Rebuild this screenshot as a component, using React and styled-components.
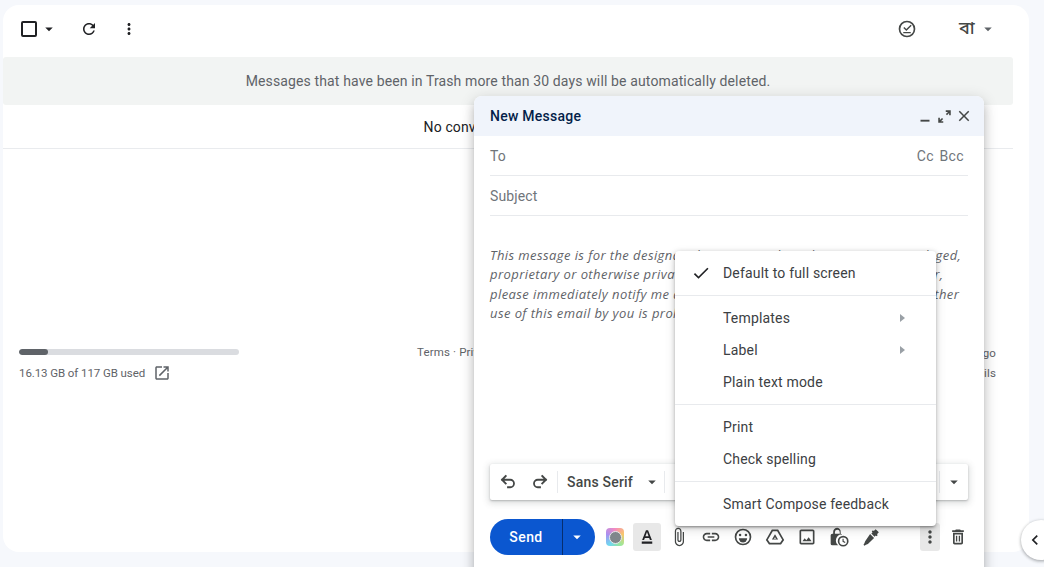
import React from "react";
import styled, { createGlobalStyle } from "styled-components";

const Global = createGlobalStyle`
  html, body { margin: 0; height: 567px; overflow: hidden; background: #f6f8fc; }
  body { font-family: Roboto, "Liberation Sans", sans-serif; letter-spacing: .13px; }
  * { box-sizing: border-box; }
`;

const Page = styled.div`
  position: relative;
  width: 1044px;
  height: 567px;
  padding: 5px 15px 15px 3px;
  overflow: hidden;
`;
const Panel = styled.main`
  width: 1026px;
  height: 547px;
  background: #fff;
  border-radius: 16px;
  padding-right: 16px;
  display: flex;
  flex-direction: column;
`;
const Toolbar = styled.div`
  height: 52px;
  display: flex;
  align-items: center;
  padding: 0 0 4px 18px;
  color: #444746;
  flex: none;
`;
const Spacer = styled.div`flex: 1;`;
const Ico = styled.svg`
  width: ${p => p.$s || 20}px;
  height: ${p => p.$s || 20}px;
  flex: none;
  display: block;
  fill: ${p => p.$c || "#444746"};
`;
const ToolSlot = styled.div`
  width: ${p => p.$w}px;
  margin-left: ${p => p.$ml || 0}px;
  display: flex;
  align-items: center;
  justify-content: center;
`;
const Lang = styled.span`
  font: 500 18px "Noto Sans Bengali", "Noto Sans", "DejaVu Sans", sans-serif;
  color: #444746;
  margin-right: 4px;
`;
const Banner = styled.div`
  height: 48px;
  flex: none;
  background: #f2f4f3;
  border-radius: 3px;
  color: #5f6368;
  font-size: 14px;
  display: flex;
  align-items: center;
  justify-content: center;
`;
const EmptyRow = styled.div`
  height: 44px;
  flex: none;
  border-bottom: 1px solid #e9ebee;
  color: #202124;
  font-size: 14px;
  display: flex;
  align-items: center;
  justify-content: center;
`;
const Footer = styled.footer`
  display: grid;
  grid-template-columns: 1fr auto 1fr;
  padding: 200px 17px 0 16px;
  font-size: 11.5px;
  color: #5f6368;
`;
const Storage = styled.div`
  display: flex;
  flex-direction: column;
  gap: 10px;
`;
const Meter = styled.div`
  width: 220px;
  height: 6px;
  border-radius: 3px;
  background: #dadce0;
  overflow: hidden;
`;
const MeterFill = styled.div`
  height: 100%;
  width: 29px;
  border-radius: 3px;
  background: #5f6368;
`;
const StorageText = styled.div`
  display: flex;
  align-items: center;
  gap: 8px;
  margin-top: -1px;
  letter-spacing: -.08px;
`;
const Terms = styled.div`
  line-height: 14px;
  margin: -4px 0 0 14px;
`;
const Activity = styled.div`
  text-align: right;
  line-height: 20px;
  margin-top: -6px;
`;

const Compose = styled.section`
  position: absolute;
  left: 474px;
  top: 96px;
  width: 510px;
  height: 480px;
  background: #fff;
  border-radius: 8px 8px 0 0;
  box-shadow: 0 8px 10px 1px rgba(0,0,0,.14), 0 3px 14px 2px rgba(0,0,0,.12), 0 5px 5px -3px rgba(0,0,0,.2);
  display: flex;
  flex-direction: column;
`;
const ComposeHead = styled.header`
  height: 40px;
  flex: none;
  background: #f0f4fb;
  border-radius: 8px 8px 0 0;
  display: flex;
  align-items: center;
  padding: 0 11px 0 16px;
  color: #041e49;
  font-size: 14px;
  font-weight: 500;
  letter-spacing: .25px;
`;
const HeadIcons = styled.div`
  display: flex;
  align-items: center;
  gap: 3px;
`;
const Fields = styled.div`
  padding: 0 16px;
  flex: none;
`;
const Field = styled.div`
  height: 40px;
  border-bottom: 1px solid #e8eaed;
  display: flex;
  align-items: center;
  justify-content: space-between;
  color: #70757a;
  font-size: 14px;
`;
const CcBcc = styled.span`
  margin-right: 4px;
  letter-spacing: .4px;
  word-spacing: 1.5px;
`;
const Disclaimer = styled.div`
  margin: 30px 16px 0;
  height: 218px;
  font: italic 13px/19.4px "Open Sans", sans-serif;
  letter-spacing: .42px;
  color: #5f6368;
  flex: none;
  white-space: nowrap;
`;
const Format = styled.div`
  margin: 0 16px;
  height: 36px;
  flex: none;
  display: flex;
  align-items: center;
  background: #fff;
  border-radius: 2px;
  box-shadow: 0 1px 2px rgba(60,64,67,.3), 0 2px 6px 2px rgba(60,64,67,.15);
  padding-left: 2px;
  color: #444746;
  font-size: 14px;
`;
const FmtBtn = styled.div`
  width: 32px;
  display: flex;
  justify-content: center;
`;
const FmtDiv = styled.div`
  width: 1px;
  height: 22px;
  background: #e8eaed;
  margin: ${p => p.$m || "0 9px 0 1px"};
`;
const FontName = styled.span`
  font-weight: 500;
  width: 76px;
  letter-spacing: .2px;
  color: #444746;
`;
const ActionRow = styled.div`
  margin: 19px 16px 0;
  height: 36px;
  flex: none;
  display: flex;
  align-items: center;
`;
const SendGroup = styled.div`
  width: 105px;
  height: 36px;
  border-radius: 18px;
  background: #0b57d0;
  color: #fff;
  display: flex;
  align-items: stretch;
  margin-right: 8px;
  flex: none;
`;
const SendLabel = styled.div`
  width: 73px;
  border-right: 1px solid #062e6f;
  display: flex;
  align-items: center;
  justify-content: center;
  font-size: 14px;
  font-weight: 500;
  letter-spacing: .4px;
`;
const SendArrow = styled.div`
  flex: 1;
  display: flex;
  align-items: center;
  justify-content: center;
  padding-right: 4px;
`;
const Act = styled.div`
  width: ${p => p.$w || 32}px;
  height: 28px;
  flex: none;
  display: flex;
  align-items: center;
  justify-content: center;
  border-radius: 3px;
  background: ${p => (p.$on ? "#e8e8e8" : "transparent")};
  margin: ${p => p.$m || 0};
`;
const ColorChip = styled.div`
  width: 18px;
  height: 18px;
  border-radius: 4px;
  background: conic-gradient(#f58ac0, #f8c86a, #9be89a, #6fd8f0, #a98ff0, #f58ac0);
  display: flex;
  align-items: center;
  justify-content: center;
`;
const ColorDot = styled.div`
  width: 13px;
  height: 13px;
  border-radius: 50%;
  background: #80868b;
  border: 1.5px solid #e8eaed;
`;

const Menu = styled.div`
  position: absolute;
  left: 675px;
  top: 251px;
  width: 261px;
  background: #fff;
  border-radius: 4px;
  padding: 6px 0;
  box-shadow: 0 2px 2px rgba(0,0,0,.14), 0 3px 1px -2px rgba(0,0,0,.12), 0 1px 5px rgba(0,0,0,.2), 0 4px 12px rgba(0,0,0,.12);
  color: #3c4043;
  font-size: 14px;
  letter-spacing: .18px;
`;
const MenuItem = styled.div`
  height: 32px;
  padding: 0 31px 0 48px;
  display: flex;
  align-items: center;
  justify-content: space-between;
  position: relative;
`;
const MenuCheck = styled.div`
  position: absolute;
  left: 16px;
  top: 6px;
`;
const MenuSep = styled.div`
  height: 1px;
  margin: 6px 0;
  background: #e8eaed;
`;
const SubArrow = styled.div`
  width: 0;
  height: 0;
  border-left: 5px solid #9aa0a6;
  border-top: 4px solid transparent;
  border-bottom: 4px solid transparent;
`;
const Collapse = styled.div`
  position: absolute;
  left: 1021px;
  top: 520px;
  width: 40px;
  height: 40px;
  border-radius: 50%;
  background: #fff;
  box-shadow: 0 1px 3px rgba(60,64,67,.3), 0 1px 3px 1px rgba(60,64,67,.15);
  padding-left: 4px;
  display: flex;
  align-items: center;
`;

const P = ({ d, s, c, vb = "0 0 24 24" }) => (
  <Ico $s={s} $c={c} viewBox={vb}><path d={d} /></Ico>
);
const D = {
  drop: "M7 10l5 5 5-5z",
  refresh: "M17.65 6.35C16.2 4.9 14.21 4 12 4c-4.42 0-7.99 3.58-7.99 8s3.57 8 7.99 8c3.73 0 6.84-2.55 7.73-6h-2.08c-.82 2.33-3.04 4-5.65 4-3.31 0-6-2.69-6-6s2.69-6 6-6c1.66 0 3.14.69 4.22 1.78L13 11h7V4l-2.35 2.35z",
  more: "M12 8c1.1 0 2-.9 2-2s-.9-2-2-2-2 .9-2 2 .9 2 2 2zm0 2c-1.1 0-2 .9-2 2s.9 2 2 2 2-.9 2-2-.9-2-2-2zm0 6c-1.1 0-2 .9-2 2s.9 2 2 2 2-.9 2-2-.9-2-2-2z",
  attach: "M16.5 6v11.5c0 2.21-1.79 4-4 4s-4-1.79-4-4V5c0-1.38 1.12-2.5 2.5-2.5s2.5 1.12 2.5 2.5v10.5c0 .55-.45 1-1 1s-1-.45-1-1V6H10v9.5c0 1.38 1.12 2.5 2.5 2.5s2.5-1.12 2.5-2.5V5c0-2.21-1.79-4-4-4S7 2.79 7 5v12.5c0 3.04 2.46 5.5 5.5 5.5s5.5-2.46 5.5-5.5V6h-1.5z",
  link: "M3.9 12c0-1.71 1.39-3.1 3.1-3.1h4V7H7c-2.76 0-5 2.24-5 5s2.24 5 5 5h4v-1.9H7c-1.71 0-3.1-1.39-3.1-3.1zM8 13h8v-2H8v2zm9-6h-4v1.9h4c1.71 0 3.1 1.39 3.1 3.1s-1.39 3.1-3.1 3.1h-4V17h4c2.76 0 5-2.24 5-5s-2.24-5-5-5z",
  open: "M19 19H5V5h7V3H5c-1.11 0-2 .9-2 2v14c0 1.1.89 2 2 2h14c1.1 0 2-.9 2-2v-7h-2v7zM14 3v2h3.59l-9.83 9.83 1.41 1.41L19 6.41V10h2V3h-7z",
  check: "M9 16.17L4.83 12l-1.42 1.41L9 19 21 7l-1.41-1.41z",
  close: "M19 6.41L17.59 5 12 10.59 6.41 5 5 6.41 10.59 12 5 17.59 6.41 19 12 13.41 17.59 19 19 17.59 13.41 12z",
  min: "M6 17h12v2.5H6z",
  full: "M14 2h8v8h-2.6V6.4l-3.4 3.4-1.8-1.8 3.4-3.4H14zM10 22H2v-8h2.6v3.6l3.4-3.4 1.8 1.8-3.4 3.4H10z",
  trash: "M6 19c0 1.1.9 2 2 2h8c1.1 0 2-.9 2-2V7H6v12zM8 9h8v10H8V9zm7.5-5l-1-1h-5l-1 1H5v2h14V4zM9.5 10.5h1.6v7H9.5zM12.9 10.5h1.6v7h-1.6z",
  textColor: "M5 18h14v3H5zM10.6 3h2.8L18.5 16h-2.6l-1-2.8H9.1L8.1 16H5.5zM9.9 11h4.2L12 5.3z",
  back: "M15.4 7.4L14 6l-6 6 6 6 1.4-1.4L10.8 12z",
  image: "M19 3H5c-1.1 0-2 .9-2 2v14c0 1.1.9 2 2 2h14c1.1 0 2-.9 2-2V5c0-1.1-.9-2-2-2zm0 16H5V5h14v14zM6.5 17h11l-3.5-4.7-2.8 3.5-2-2.4z",
  pen: "M17.6 2.6l3.8 3.8-2.3 2.3 1 1-1.4 1.4-1-1-1.5 1.5-3.8-3.8 1.5-1.5-1-1 1.4-1.4 1 1zM10.9 8.3l4.8 4.8-7.4 7.4-2.4.9-1.8 1.1-1.1-1.1 1.1-1.8.9-2.4z",
};
const SMILE = (
  <Ico viewBox="0 0 24 24">
    <path d="M12 2a10 10 0 1 0 0 20 10 10 0 0 0 0-20zm0 18a8 8 0 1 1 0-16 8 8 0 0 1 0 16z" />
    <circle cx="8.5" cy="9.5" r="1.5" /><circle cx="15.5" cy="9.5" r="1.5" />
    <path d="M7 13.5h10a5 5 0 0 1-10 0z" />
  </Ico>
);
const DRIVE = (
  <Ico viewBox="0 0 24 24">
    <path fillRule="evenodd" d="M8.2 3h7.6L23 15.5 19.2 21H4.8L1 15.5zM9.4 5L3.4 15.4 5.9 19h12.2l2.5-3.6L14.6 5zM12 8.6l3.7 6.4H8.3zM12 12.4l-1.3 1.6h2.6z" />
  </Ico>
);
const LOCKCLOCK = (
  <Ico viewBox="0 0 24 24">
    <path d="M10 1a5 5 0 0 0-5 5v2H4a2 2 0 0 0-2 2v10a2 2 0 0 0 2 2h7.2a7.5 7.5 0 0 1 4.3-13.4V10a2 2 0 0 0-1.5-2V6a5 5 0 0 0-4-5zm0 2.2A2.9 2.9 0 0 1 12.9 6v2H7.1V6A2.9 2.9 0 0 1 10 3.2z" />
    <path fillRule="evenodd" d="M17 10.5a6.5 6.5 0 1 0 0 13 6.5 6.5 0 0 0 0-13zm0 2a4.5 4.5 0 1 1 0 9 4.5 4.5 0 0 1 0-9zM16.2 14v3.6l2.9 1.7.7-1.2-2.2-1.3V14z" />
  </Ico>
);
const TASK = (
  <Ico $s={20} viewBox="0 0 24 24">
    <path d="M12 2a10 10 0 1 0 0 20 10 10 0 0 0 0-20zm0 18a8 8 0 1 1 0-16 8 8 0 0 1 0 16z" />
    <path d="M16.4 6.8l-5.2 5.2-2.4-2.3-1.2 1.2 3.6 3.6 6.4-6.5zM7.5 15.5h9V17h-9z" />
  </Ico>
);
const STROKE = ({ d }) => (
  <Ico $s={18} viewBox="0 0 24 24" style={{ fill: "none", stroke: "#444746", strokeWidth: 2.4, strokeLinecap: "square" }}>
    <path d={d} />
  </Ico>
);

const Checkbox = styled.div`
  width: 16px;
  height: 16px;
  border: 2px solid #202124;
  border-radius: 2px;
  flex: none;
`;

export default function App() {
  return (
    <>
      <Global />
      <Page>
        <Panel>
          <Toolbar>
            <Checkbox />
            <ToolSlot $w={20} $ml={2}><P d={D.drop} s={18} c="#202124" /></ToolSlot>
            <ToolSlot $w={20} $ml={20}><P d={D.refresh} s={18} c="#202124" /></ToolSlot>
            <ToolSlot $w={20} $ml={20}><P d={D.more} s={18} c="#202124" /></ToolSlot>
            <Spacer />
            {TASK}
            <ToolSlot $w={46} $ml={38}>
              <Lang>বা</Lang>
              <P d={D.drop} s={18} c="#5f6368" />
            </ToolSlot>
            <ToolSlot $w={12} />
          </Toolbar>
          <Banner>Messages that have been in Trash more than 30 days will be automatically deleted.</Banner>
          <EmptyRow>No conversations in Trash.</EmptyRow>
          <Footer>
            <Storage>
              <Meter><MeterFill /></Meter>
              <StorageText>
                16.13 GB of 117 GB used
                <P d={D.open} s={18} c="#5f6368" />
              </StorageText>
            </Storage>
            <Terms>Terms · Privacy · Programme Policies</Terms>
            <Activity>
              Last account activity: 3 minutes ago<br />Details
            </Activity>
          </Footer>
        </Panel>

        <Compose>
          <ComposeHead>
            New Message
            <Spacer />
            <HeadIcons>
              <P d={D.min} s={18} c="#444746" />
              <P d={D.full} s={15} c="#444746" />
              <P d={D.close} s={18} c="#444746" />
            </HeadIcons>
          </ComposeHead>
          <Fields>
            <Field>To<CcBcc>Cc Bcc</CcBcc></Field>
            <Field>Subject</Field>
          </Fields>
          <Disclaimer>
            This message is for the designated recipient only and may contain privileged,<br />
            proprietary or otherwise private materials. If you have received it in error,<br />
            please immediately notify me and permanently delete the original. Any other<br />
            use of this email by you is prohibited.
          </Disclaimer>
          <Format>
            <FmtBtn><STROKE d="M9 14L4 9l5-5M4 9h11a5 5 0 0 1 0 10h-3" /></FmtBtn>
            <FmtBtn><STROKE d="M15 14l5-5-5-5M20 9H9a5 5 0 0 0 0 10h3" /></FmtBtn>
            <FmtDiv />
            <FontName>Sans Serif</FontName>
            <P d={D.drop} s={18} />
            <FmtDiv $m="0 0 0 3px" />
            <Spacer />
            <FmtDiv $m="0 5px 0 0" />
            <P d={D.drop} s={18} />
            <ToolSlot $w={5} />
          </Format>
          <ActionRow>
            <SendGroup>
              <SendLabel>Send</SendLabel>
              <SendArrow><P d={D.drop} s={18} c="#fff" /></SendArrow>
            </SendGroup>
            <Act $w={24} $m="0 6px 0 0"><ColorChip><ColorDot /></ColorChip></Act>
            <Act $w={28} $on $m="0 2px 0 0"><P d={D.textColor} s={18} c="#202124" /></Act>
            <Act><P d={D.attach} /></Act>
            <Act><P d={D.link} /></Act>
            <Act>{SMILE}</Act>
            <Act>{DRIVE}</Act>
            <Act><P d={D.image} /></Act>
            <Act>{LOCKCLOCK}</Act>
            <Act><P d={D.pen} /></Act>
            <Act $w={20} $on $m="0 0 0 33px"><P d={D.more} /></Act>
            <Act $w={36}><P d={D.trash} /></Act>
          </ActionRow>
        </Compose>

        <Menu>
          <MenuItem>
            <MenuCheck><P d={D.check} s={20} c="#202124" /></MenuCheck>
            Default to full screen
          </MenuItem>
          <MenuSep />
          <MenuItem>Templates<SubArrow /></MenuItem>
          <MenuItem>Label<SubArrow /></MenuItem>
          <MenuItem>Plain text mode</MenuItem>
          <MenuSep />
          <MenuItem>Print</MenuItem>
          <MenuItem>Check spelling</MenuItem>
          <MenuSep />
          <MenuItem>Smart Compose feedback</MenuItem>
        </Menu>

        <Collapse><P d={D.back} s={20} c="#202124" /></Collapse>
      </Page>
    </>
  );
}
